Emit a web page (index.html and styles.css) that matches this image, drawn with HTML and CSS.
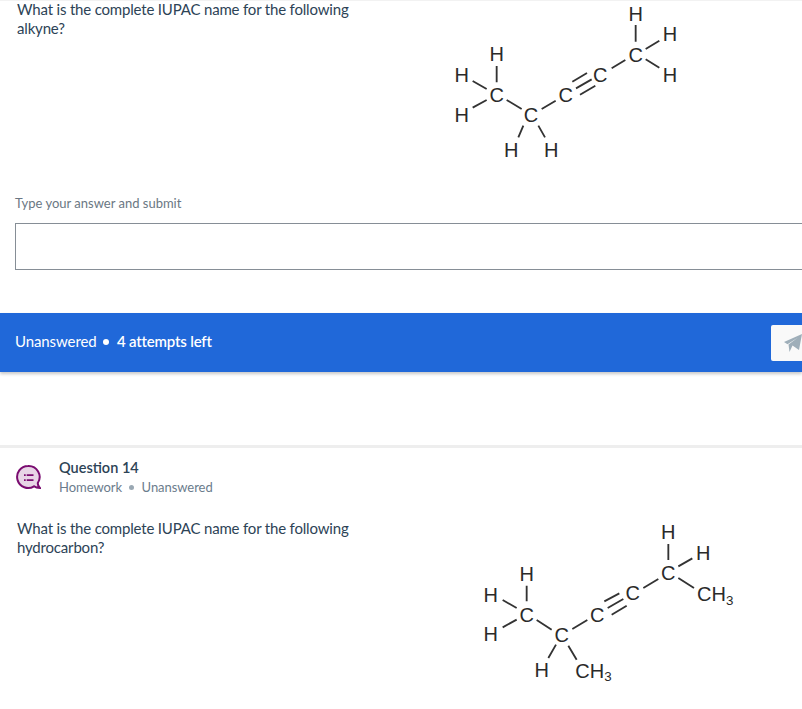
FILE: index.html
```html
<!DOCTYPE html>
<html lang="en">
<head>
    <meta charset="UTF-8">
    <meta name="viewport" content="width=device-width, initial-scale=1.0">
    <title>Homework Questions</title>
    <link rel="stylesheet" href="styles.css">
</head>
<body>
    <main class="page">
        <section class="question-body first">
            <p class="prompt">What is the complete IUPAC name for the following alkyne?</p>
            <svg class="molecule molecule-one" viewBox="0 0 780 510" role="img" aria-label="Alkyne structure">
                <g class="bonds">
                    <path d="M587 75V125M617 147L658 122M617 178L658 203M515 205L556 180"/>
                    <path d="M397 245L441 219M408 265L455 238M420 284L466 257"/>
                    <path d="M305 327L347 302M200 300L245 327M250 377L235 412M295 377L315 412"/>
                    <path d="M170 198V247M98 243L140 267M98 323L140 300"/>
                </g>
                <g class="atoms">
                    <text x="587" y="62">H</text>
                    <text x="690" y="122">H</text>
                    <text x="690" y="245">H</text>
                    <text x="587" y="185">C</text>
                    <text x="481" y="245">C</text>
                    <text x="377" y="307">C</text>
                    <text x="273" y="367">C</text>
                    <text x="170" y="307">C</text>
                    <text x="170" y="182">H</text>
                    <text x="65" y="247">H</text>
                    <text x="65" y="367">H</text>
                    <text x="214" y="470">H</text>
                    <text x="334" y="470">H</text>
                </g>
            </svg>
        </section>

        <section class="answer">
            <label class="answer-label" for="answer-input">Type your answer and submit</label>
            <input class="answer-input" id="answer-input" type="text">
        </section>

        <section class="status-bar">
            <p class="status-text">Unanswered <span class="status-dot"></span> <strong>4 attempts left</strong></p>
            <button class="send-button" aria-label="Submit">
                <svg viewBox="0 0 18 18" width="18" height="18">
                    <path d="M0 8L18 0L15 16L8.500 11.500L5.500 18L4.500 10.500L14 3.500L3.500 10.300Z"/>
                </svg>
            </button>
        </section>

        <section class="question-head">
            <svg class="question-icon" viewBox="0 0 26 26" width="26" height="26">
                <path class="bubble" d="M13 2a11 11 0 1 0 6 20.300c1.500 1.200 3 1.700 6 1.700c-1.500-1.200-2.300-3-2.200-5A11 11 0 0 0 13 2Z"/>
                <path class="bullets" d="M9 10.300h1.700v1.700H9zM9 15.300h1.700v1.700H9zM11.700 10.300h6.800v1.700h-6.800zM11.700 15.300h6.800v1.700h-6.800z"/>
            </svg>
            <div>
                <h2 class="question-title">Question 14</h2>
                <p class="question-meta">Homework <span class="meta-dot"></span> Unanswered</p>
            </div>
        </section>

        <section class="question-body second">
            <p class="prompt">What is the complete IUPAC name for the following hydrocarbon?</p>
            <svg class="molecule molecule-two" viewBox="0 0 840 540" role="img" aria-label="Hydrocarbon structure">
                <g class="bonds">
                    <path d="M595 90V138M625 157L667 133M625 192L672 222M520 222L565 195"/>
                    <path d="M403 262L448 238M413 282L460 255M425 302L470 275"/>
                    <path d="M307 345L352 318M200 318L245 347M258 392L235 432M295 395L320 437"/>
                    <path d="M170 215V262M98 258L140 282M98 340L140 317"/>
                </g>
                <g class="atoms">
                    <text x="595" y="74">H</text>
                    <text x="700" y="138">H</text>
                    <text x="595" y="199">C</text>
                    <text x="488" y="259">C</text>
                    <text x="382" y="324">C</text>
                    <text x="275" y="383">C</text>
                    <text x="170" y="324">C</text>
                    <text x="170" y="200">H</text>
                    <text x="62" y="263">H</text>
                    <text x="62" y="382">H</text>
                    <text x="215" y="488">H</text>
                    <text class="group" x="681" y="262">CH<tspan class="sub" dy="10">3</tspan></text>
                    <text class="group" x="316" y="492">CH<tspan class="sub" dy="10">3</tspan></text>
                </g>
            </svg>
        </section>
    </main>
</body>
</html>
```

FILE: styles.css
```css
html, body {
    margin: 0;
    background-color: white;
}
body {
    font-family: Lato, "Open Sans", sans-serif;
    color: #2d4356;
    overflow: hidden;
    height: 709px;
}
.page {
    width: 802px;
    overflow: hidden;
    border-top: 1px solid #f2f2f2;
}
.question-body {
    display: flex;
    align-items: flex-start;
    padding-left: 17px;
}
.question-body.first {
    height: 192px;
}
.question-body.second {
    height: 180px;
}
.prompt {
    width: 345px;
    margin: 0;
    font-size: 15px;
    line-height: 19px;
    letter-spacing: -0.18px;
}
.first .prompt {
    margin-top: -1px;
}
.second .prompt {
    margin-top: -1px;
}
.molecule {
    flex: none;
}
.molecule-one {
    width: 260px;
    height: 170px;
    margin-left: 78px;
    margin-top: -1px;
}
.molecule-two {
    width: 280px;
    height: 180px;
    margin-left: 108px;
    margin-top: -6px;
}
.bonds path {
    fill: none;
    stroke: #333;
    stroke-width: 5.500;
}
.atoms text {
    font-family: "Liberation Sans", Arial, sans-serif;
    font-size: 60px;
    fill: #2a2a2a;
    text-anchor: middle;
}
.atoms .group {
    text-anchor: start;
}
.atoms .sub {
    font-size: 40px;
}
.answer {
    padding-left: 15px;
}
.answer-label {
    display: block;
    font-size: 13px;
    line-height: 20px;
    color: #6a7783;
}
.answer-input {
    display: block;
    box-sizing: border-box;
    width: 820px;
    height: 47px;
    margin-top: 10px;
    border: 1px solid #868e96;
    border-radius: 0;
    background-color: white;
}
.status-bar {
    display: flex;
    align-items: center;
    justify-content: space-between;
    height: 59px;
    margin-top: 43px;
    padding-left: 15px;
    background-color: #2068d9;
    box-shadow: 0 2px 3px rgba(0, 0, 0, 0.22);
}
.status-text {
    margin: 0 0 4px;
    font-size: 15px;
    letter-spacing: -0.1px;
    color: white;
}
.status-text strong {
    font-weight: 600;
    letter-spacing: -0.2px;
}
.status-dot {
    display: inline-block;
    width: 6px;
    height: 6px;
    margin: 0 4px 0 3px;
    border-radius: 50%;
    background-color: white;
    vertical-align: 2px;
}
.send-button {
    display: flex;
    align-items: center;
    flex: none;
    width: 41px;
    height: 36px;
    margin-right: -10px;
    padding: 0 0 0 13px;
    border: none;
    border-radius: 2px;
    background-color: #f9f9f9;
}
.send-button path {
    fill: #9eaeb9;
}
.question-head {
    display: flex;
    align-items: flex-start;
    gap: 18px;
    height: 75px;
    margin-top: 73px;
    padding-left: 15px;
    border-top: 3px solid #eeeeee;
    box-sizing: border-box;
}
.question-icon {
    flex: none;
    margin-top: 16px;
}
.bubble {
    fill: #e8d5e6;
    stroke: #7a0c70;
    stroke-width: 2;
}
.bullets {
    fill: #7a0c70;
}
.question-title {
    margin: 10px 0 0;
    font-size: 14.500px;
    line-height: 20px;
    font-weight: 600;
}
.question-meta {
    margin: -1px 0 0;
    font-size: 13px;
    line-height: 20px;
    letter-spacing: -0.05px;
    color: #6b7c8c;
}
.meta-dot {
    display: inline-block;
    width: 5px;
    height: 5px;
    margin: 0 4px;
    border-radius: 50%;
    background-color: #9aa8b3;
    vertical-align: 2px;
}
```
